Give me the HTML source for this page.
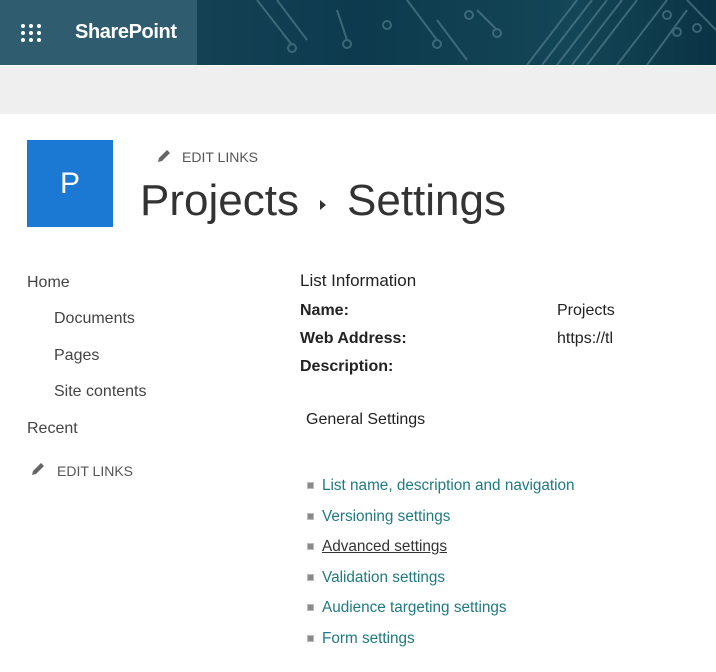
<!DOCTYPE html>
<html><head><style>
body{margin:0;width:716px;height:672px;overflow:hidden;background:#fff;font-family:"Liberation Sans",sans-serif;position:relative}
.a{position:absolute;white-space:nowrap}
.top{position:absolute;left:0;top:0;width:716px;height:65px;background:linear-gradient(90deg,#1d4a5c,#0d3a4e 50%,#134656 80%,#0a3344)}
.lt{position:absolute;left:0;top:0;width:197px;height:65px;background:#2f5c6e}
.gray{position:absolute;left:0;top:66px;width:716px;height:48px;background:#efefef}
.nav{font-size:16px;color:#444}
.lnk{font-size:15.3px;color:#1f7a80}
.sq{position:absolute;left:307px;width:7px;height:7px;background:#8a8a8a;border:1px solid #bbb;box-sizing:border-box}
.b{font-size:16px;font-weight:bold;color:#222}
</style></head><body>
<div class="top"></div><div class="lt"></div>
<svg class="a" style="left:197px;top:0" width="519" height="65">
<g stroke="#5b8593" stroke-width="2" fill="none" opacity=".6">
<path d="M60 0 L95 45 M80 0 L110 40 M140 10 L150 40 M210 0 L240 40 M240 20 L270 60 M280 10 L300 30 M330 65 L380 0 M345 65 L395 0 M360 65 L410 0 M375 65 L425 0 M390 65 L440 0 M420 65 L470 0 M450 65 L490 10 M490 0 L519 30"/>
<circle cx="95" cy="48" r="4"/><circle cx="150" cy="44" r="4"/><circle cx="240" cy="44" r="4"/><circle cx="300" cy="33" r="4"/><circle cx="272" cy="15" r="4"/><circle cx="470" cy="15" r="4"/><circle cx="480" cy="32" r="4"/><circle cx="500" cy="28" r="4"/><circle cx="190" cy="25" r="4"/>
</g></svg>
<svg class="a" style="left:20px;top:24px" width="24" height="20" fill="#fff">
<circle cx="3" cy="2" r="2"/><circle cx="11" cy="2" r="2"/><circle cx="19" cy="2" r="2"/>
<circle cx="3" cy="9" r="2"/><circle cx="11" cy="9" r="2"/><circle cx="19" cy="9" r="2"/>
<circle cx="3" cy="16" r="2"/><circle cx="11" cy="16" r="2"/><circle cx="19" cy="16" r="2"/></svg>
<div class="a" style="left:75px;top:21px;font-size:20px;font-weight:bold;color:#fff;letter-spacing:-0.4px">SharePoint</div>
<div class="gray"></div>
<div class="a" style="left:27px;top:140px;width:86px;height:87px;background:#1b78d3;color:#fff;font-size:30px;text-align:center;line-height:87px">P</div>
<svg class="a" style="left:156px;top:148px" width="16" height="16"><path d="M2 14 L3 10 L11 2 L14 5 L6 13 Z" fill="#666"/></svg>
<div class="a" style="left:182px;top:149px;font-size:14px;color:#555">EDIT LINKS</div>
<div class="a" style="left:140px;top:176px;font-size:44px;color:#333">Projects</div>
<svg class="a" style="left:319px;top:199px" width="8" height="12"><path d="M1 1 L7 6 L1 11Z" fill="#333"/></svg>
<div class="a" style="left:347px;top:176px;font-size:44px;color:#333">Settings</div>
<div class="a nav" style="left:27px;top:274px">Home</div>
<div class="a nav" style="left:54px;top:310px">Documents</div>
<div class="a nav" style="left:54px;top:347px">Pages</div>
<div class="a nav" style="left:54px;top:383px">Site contents</div>
<div class="a nav" style="left:27px;top:420px">Recent</div>
<svg class="a" style="left:30px;top:461px" width="16" height="16"><path d="M2 14 L3 10 L11 2 L14 5 L6 13 Z" fill="#666"/></svg>
<div class="a" style="left:57px;top:463px;font-size:14px;color:#555">EDIT LINKS</div>
<div class="a" style="left:300px;top:271px;font-size:17px;color:#222">List Information</div>
<div class="a b" style="left:300px;top:302px">Name:</div>
<div class="a b" style="left:300px;top:330px">Web Address:</div>
<div class="a b" style="left:300px;top:358px">Description:</div>
<div class="a" style="left:557px;top:302px;font-size:16px;color:#222">Projects</div>
<div class="a" style="left:557px;top:330px;font-size:16px;color:#222;width:66px;overflow:hidden">https://tl</div>
<div class="a" style="left:306px;top:411px;font-size:16px;color:#222">General Settings</div>
<div class="sq" style="top:482px"></div><div class="a lnk" style="left:322px;top:477px">List name, description and navigation</div>
<div class="sq" style="top:513px"></div><div class="a lnk" style="left:322px;top:508px">Versioning settings</div>
<div class="sq" style="top:543px"></div><div class="a lnk" style="left:322px;top:538px;color:#333;text-decoration:underline">Advanced settings</div>
<div class="sq" style="top:574px"></div><div class="a lnk" style="left:322px;top:569px">Validation settings</div>
<div class="sq" style="top:604px"></div><div class="a lnk" style="left:322px;top:599px">Audience targeting settings</div>
<div class="sq" style="top:635px"></div><div class="a lnk" style="left:322px;top:630px">Form settings</div>
</body></html>
